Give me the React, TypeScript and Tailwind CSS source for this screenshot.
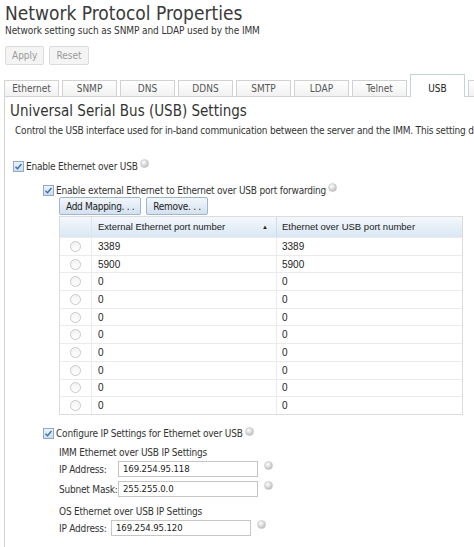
import React from 'react';

const F = "font-['DejaVu_Sans_Condensed','DejaVu_Sans',sans-serif]";
const A = "font-['Liberation_Sans',Arial,sans-serif]";

const Check = () => (
    <svg width="11" height="11" viewBox="0 0 11 11" className="shrink-0">
        <defs>
            <linearGradient id="cb" x1="0" y1="0" x2="0" y2="1">
                <stop offset="0" stopColor="#eef4fb"/>
                <stop offset="1" stopColor="#c9dbee"/>
            </linearGradient>
        </defs>
        <rect x="0.5" y="0.5" width="10" height="10" fill="url(#cb)" stroke="#8fa9c6"/>
        <path d="M2.5 5.8 L4.5 7.8 L8.5 3" fill="none" stroke="#3b6fb0" strokeWidth="1.4"/>
    </svg>
);

const Help = () => (
    <svg width="9" height="9" viewBox="0 0 9 9" className="shrink-0 self-start">
        <defs>
            <radialGradient id="hg" cx="0.4" cy="0.35" r="0.7">
                <stop offset="0" stopColor="#ffffff"/>
                <stop offset="1" stopColor="#b9b9b9"/>
            </radialGradient>
        </defs>
        <circle cx="4.5" cy="4.5" r="4" fill="url(#hg)" stroke="#c8c8c8" strokeWidth="0.6"/>
    </svg>
);

const Radio = () => (
    <span className="inline-block w-[11px] h-[11px] rounded-full border border-[#c9c9c9] bg-gradient-to-b from-[#f2f2f2] to-white"/>
);

const tabs = ['Ethernet', 'SNMP', 'DNS', 'DDNS', 'SMTP', 'LDAP', 'Telnet', 'USB', 'IPMI'];

const rows = ['3389', '5900', '0', '0', '0', '0', '0', '0', '0', '0'];

const IpRow = ({label, value, labelWidth}: any) => (
    <div className="flex items-center h-[17px] ml-[54px]">
        <span className={`${labelWidth} shrink-0 whitespace-nowrap text-[10px] tracking-[-0.2px] text-[#333]`}>{label}</span>
        <div className="w-[140px] h-[16px] shrink-0 border border-[#c6c6c6] bg-white flex items-center pl-[4px] text-[9.5px] tracking-[-0.1px] text-[#222]">{value}</div>
        <span className="ml-[6px] flex self-start"><Help/></span>
    </div>
);

const App = () => {
    return (
        <div className={`w-[474px] h-[547px] overflow-hidden bg-white text-[#333] ${F}`}>
            <div className="pl-[5px]">
                <h1 className="text-[19px] leading-[24px] text-[#3a3a3a] pt-[1px]">Network Protocol Properties</h1>
                <p className="text-[10px] leading-[12px] tracking-[-0.1px] text-[#333]">Network setting such as SNMP and LDAP used by the IMM</p>
                <div className="flex gap-[5px] mt-[9px]">
                    <button className="h-[19px] px-[6px] border border-[#dcdcdc] bg-[#f4f4f4] text-[10px] text-[#9a9a9a] rounded-[2px]">Apply</button>
                    <button className="h-[19px] px-[6px] border border-[#dcdcdc] bg-[#f4f4f4] text-[10px] text-[#9a9a9a] rounded-[2px]">Reset</button>
                </div>
            </div>

            <div className="flex items-end gap-[3px] pl-[4px] mt-[9px] relative z-10">
                {tabs.map((t) => t === 'USB' ? (
                    <div key={t}
                         className="w-[55px] h-[23px] shrink-0 border border-b-0 border-[#c3d2e0] bg-white -mb-px flex items-center justify-center text-[10px] text-[#222] pt-[4px]">{t}</div>
                ) : (
                    <div key={t}
                         className="w-[55px] h-[16px] shrink-0 border border-b-0 border-[#d2d2d2] bg-gradient-to-b from-white to-[#f1f1f1] flex items-center justify-center text-[10px] text-[#555]">{t}</div>
                ))}
            </div>

            <div className="ml-[4px] w-[520px] border-l border-t border-[#d2d2d2] pb-[20px]">
                <h2 className="h-[26px] leading-[26px] mt-[1px] pl-[5px] text-[15px] text-[#333]">Universal Serial Bus (USB) Settings</h2>
                <p className="h-[14px] leading-[14px] pl-[10px] text-[10px] tracking-[-0.2px] text-[#333] whitespace-nowrap">Control the USB interface used for in-band communication between the server and the IMM. This setting does not affect the USB ports on the server.</p>

                <label className="flex items-center gap-[2px] h-[14px] mt-[21px] pl-[8px] text-[10px] tracking-[-0.2px]">
                    <Check/>
                    <span>Enable Ethernet over USB</span>
                    <Help/>
                </label>

                <label className="flex items-center gap-[2px] h-[14px] mt-[10px] pl-[38px] text-[10px] tracking-[-0.2px]">
                    <Check/>
                    <span>Enable external Ethernet to Ethernet over USB port forwarding</span>
                    <Help/>
                </label>

                <div className="flex gap-[5px] pl-[54px] h-[18px]">
                    <button className="px-[6px] border border-[#9fb6cf] bg-gradient-to-b from-[#f3f7fc] to-[#d3e1ef] rounded-[2px] text-[10px] tracking-[-0.3px] text-[#222]">Add Mapping. . .</button>
                    <button className="px-[6px] border border-[#9fb6cf] bg-gradient-to-b from-[#f3f7fc] to-[#d3e1ef] rounded-[2px] text-[10px] tracking-[-0.3px] text-[#222]">Remove. . .</button>
                </div>

                <div className={`ml-[54px] mt-[1px] w-[404px] border border-[#dcdcdc] ${A}`}>
                    <div className="flex h-[20px] bg-gradient-to-b from-[#f4f8fc] to-[#d9e7f3] text-[9.5px] text-[#222]">
                        <div className="w-[32px] border-r border-[#dce6ef]"/>
                        <div className="w-[185px] border-r border-[#cfdbe7] flex items-center pl-[6px] pr-[8px]">
                            <span className="flex-1">External Ethernet port number</span>
                            <span className="text-[6px]">▲</span>
                        </div>
                        <div className="flex-1 flex items-center pl-[5px]">Ethernet over USB port number</div>
                    </div>
                    {rows.map((r, i) => (
                        <div key={i} className="flex h-[17.7px] border-t border-[#ebebeb] text-[10px] text-[#222]">
                            <div className="w-[32px] border-r border-[#ebebeb] flex items-center justify-center"><Radio/></div>
                            <div className="w-[185px] border-r border-[#ebebeb] flex items-center pl-[6px]">{r}</div>
                            <div className="flex-1 flex items-center pl-[5px]">{r}</div>
                        </div>
                    ))}
                </div>

                <label className="flex items-center gap-[2px] h-[14px] mt-[12px] pl-[38px] text-[10px] tracking-[-0.2px]">
                    <Check/>
                    <span>Configure IP Settings for Ethernet over USB</span>
                    <Help/>
                </label>

                <p className="h-[14px] leading-[14px] mt-[5px] pl-[54px] text-[10px] tracking-[-0.2px]">IMM Ethernet over USB IP Settings</p>
                <div className="mt-[1px]">
                    <IpRow label="IP Address:" value="169.254.95.118" labelWidth="w-[59px]"/>
                </div>
                <div className="mt-[3px]">
                    <IpRow label="Subnet Mask:" value="255.255.0.0" labelWidth="w-[59px]"/>
                </div>
                <p className="h-[14px] leading-[14px] mt-[7px] pl-[54px] text-[10px] tracking-[-0.2px]">OS Ethernet over USB IP Settings</p>
                <div className="mt-[1px]">
                    <IpRow label="IP Address:" value="169.254.95.120" labelWidth="w-[52px]"/>
                </div>
            </div>
        </div>
    );
};

export default App;
